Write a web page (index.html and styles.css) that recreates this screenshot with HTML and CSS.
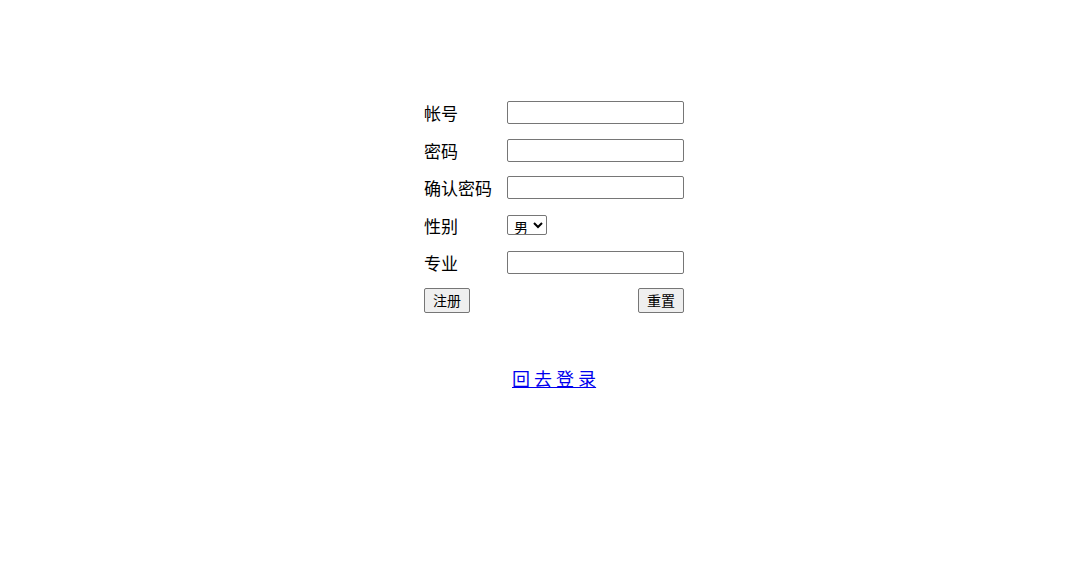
FILE: index.html
```html
<!DOCTYPE html>
<html lang="zh-CN">
<head>
<meta charset="utf-8">
<title>注册</title>
<link rel="stylesheet" href="styles.css">
</head>
<body>
<div class="page">
  <form class="form">
    <label class="label" for="acc">帐号</label>
    <div class="field"><input class="text" id="acc" type="text"></div>
    <label class="label" for="pwd">密码</label>
    <div class="field"><input class="text" id="pwd" type="password"></div>
    <label class="label" for="pwd2">确认密码</label>
    <div class="field"><input class="text" id="pwd2" type="password"></div>
    <label class="label" for="sex">性别</label>
    <div class="field"><select class="select" id="sex"><option>男</option><option>女</option></select></div>
    <label class="label" for="major">专业</label>
    <div class="field"><input class="text" id="major" type="text"></div>
    <div class="actions">
      <button class="btn" type="submit">注册</button>
      <button class="btn" type="reset">重置</button>
    </div>
  </form>
  <div class="back"><a class="back-link" href="#">回 去 登 录</a></div>
</div>
</body>
</html>
```
FILE: styles.css
```css
html, body {
  margin: 0;
  padding: 0;
  background: #fff;
}
body {
  font-family: "Noto Sans CJK SC", "Noto Sans", sans-serif;
  color: #000;
}
.page {
  padding-top: 94px;
  padding-left: 424px;
}
.form {
  display: grid;
  grid-template-columns: 83px 177px;
  grid-auto-rows: 37.5px;
  width: 260px;
}
.label {
  font-size: 17px;
  display: flex;
  align-items: center;
  line-height: 1;
}
.field {
  display: flex;
  align-items: center;
}
.text {
  box-sizing: border-box;
  width: 177px;
  height: 23px;
  margin: 0;
  border: 1px solid #767676;
  border-radius: 2px;
  padding: 1px 2px;
  font-size: 13px;
}
.select {
  box-sizing: border-box;
  width: 40px;
  height: 20px;
  margin: 0;
  font-size: 14px;
  font-family: "Noto Sans CJK SC", sans-serif;
  padding: 0 0 0 2px;
  border: 1px solid #767676;
  border-radius: 2px;
  background: #fff;
  color: #000;
}
.actions {
  grid-column: 1 / 3;
  display: flex;
  justify-content: space-between;
  align-items: center;
}
.btn {
  box-sizing: border-box;
  width: 46px;
  height: 25px;
  margin: 0;
  padding: 0;
  font-size: 14px;
  font-family: "Noto Sans CJK SC", sans-serif;
  border: 1px solid #767676;
  border-radius: 2px;
  background: #efefef;
  color: #000;
}
.back {
  margin-top: 46px;
  padding-left: 88px;
}
.back-link {
  font-size: 18px;
  color: #0000ee;
  text-decoration: underline;
}
```
